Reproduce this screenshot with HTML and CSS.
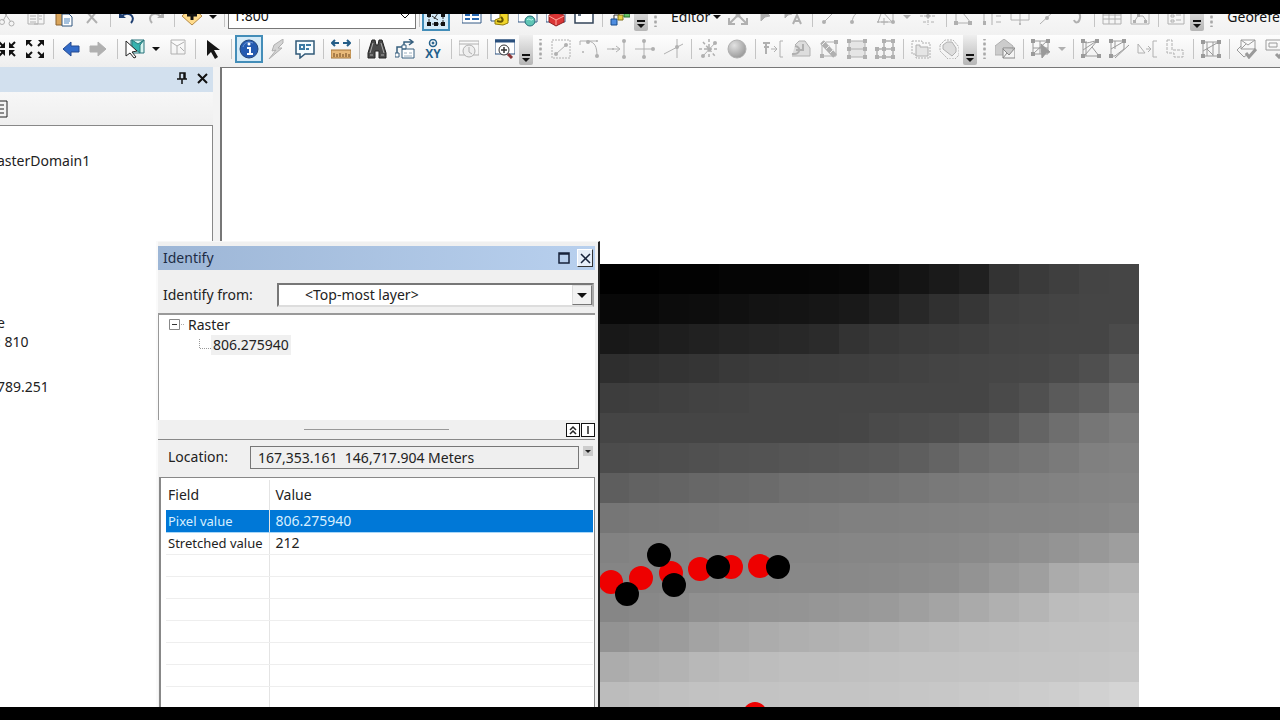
FILE: index.html
```html
<!DOCTYPE html>
<html lang="en">
<head>
<meta charset="utf-8">
<title>Identify - Map</title>
<link rel="stylesheet" href="styles.css">
</head>
<body>
<div class="app">
  <div class="toolbar toolbar-top" role="toolbar" aria-label="Standard and Editor">
    <button class="tool off" aria-label="Cut"><svg viewBox="0 0 20 20"><path d="M12 1 5 14M5 4l8 11"/><circle cx="4" cy="15" r="2.5"/><circle cx="13.500" cy="16.500" r="2.500"/></svg></button>
    <button class="tool off" aria-label="Copy"><svg viewBox="0 0 20 20"><path d="M2 2h10v15H2zM8 5h8l2 2v10H8M4 9h6M4 12h6M4 15h6M13 9h3M13 12h3"/></svg></button>
    <button class="tool" aria-label="Paste"><svg viewBox="0 0 20 20"><path fill="#d9a45a" stroke="#8a6330" d="M2 1h13v17H2z"/><path fill="#fff" stroke="#31577f" d="M8 7h7l3 3v9H8z"/><path stroke="#4b83bd" d="M10 12h6M10 14h6M10 16h5"/></svg></button>
    <button class="tool off" aria-label="Delete"><svg viewBox="0 0 20 20"><path stroke-width="2" d="m4 4 11 12M15 4 5 16"/></svg></button>
    <span class="sep"></span>
    <button class="tool" aria-label="Undo"><svg viewBox="0 0 20 20"><path stroke="#1f3f70" stroke-width="2" d="M3 10c6-7 16-1 10 6"/><path fill="#1f3f70" stroke="none" d="M1 5v6h7z"/></svg></button>
    <button class="tool off" aria-label="Redo"><svg viewBox="0 0 20 20"><path stroke-width="2" d="M15 10C9 3 0 9 6 16"/><path fill="currentColor" stroke="none" d="M18 5v6h-7z"/></svg></button>
    <span class="sep"></span>
    <button class="tool" aria-label="Add data"><svg viewBox="0 0 20 20"><path fill="#ffdb8b" stroke="#b58a48" d="M10 0 20 9 10 18 0 9z"/><path stroke="#111" stroke-width="3" d="M10 3v10M5 8h10"/></svg></button>
    <button class="caret" aria-label="Add data menu"></button>
    <span class="sep"></span>
    <label class="scale"><span class="hidden">Map scale</span><input value="1:800"><svg viewBox="0 0 12 8"><path d="m1 1 5 5 5-5"/></svg></label>
    <span class="sep narrow"></span>
    <button class="tool on" aria-label="Editor toolbar"><svg viewBox="0 0 20 20"><path stroke="#333" stroke-dasharray="3 1" d="M3 8v9h14V8"/><path stroke="#333" d="M8 12 14 3M6 9l6 4"/><path fill="#111" stroke="none" d="M1 6h4v4H1zM1 15h4v4H1zM8 15h4v4H8zM15 15h4v4h-4zM15 6h4v4h-4z"/></svg></button>
    <span class="sep blank"></span>
    <button class="tool" aria-label="Table of contents"><svg viewBox="0 0 20 20"><path fill="#fff" stroke="#345a86" d="M0 1h19v15H0z"/><path stroke="#2a68b0" stroke-width="2" d="M3 8h5M3 12h5M10 8h7M10 12h7"/></svg></button>
    <button class="tool" aria-label="Catalog"><svg viewBox="0 0 20 20"><path fill="#fff" stroke="#345a86" d="M1 1h17v13H1z"/><path fill="#f1d62a" stroke="#927b0b" d="M10 6h8v10l-5 2-8-1v-4l5-2z"/><path stroke="#665500" stroke-width="2" d="M7 14c6 2 7-1 4-4"/></svg></button>
    <button class="tool" aria-label="Search"><svg viewBox="0 0 20 20"><path fill="#fff" stroke="#345a86" d="M0 1h19v14H0z"/><circle cx="12" cy="14" r="5" fill="#60c5b5" stroke="#236d79"/><path stroke="#c3fff4" d="M9 13c2-3 4 2 6-1"/></svg></button>
    <button class="tool" aria-label="Toolbox"><svg viewBox="0 0 20 20"><path fill="#fff" stroke="#345a86" d="M0 1h19v14H0z"/><path fill="#db3535" stroke="#8f2020" d="m3 8 7-2 8 2v7l-8 4-7-4z"/><path stroke="#ffaaa0" d="m3 9 7 4 8-4M10 13v5"/></svg></button>
    <button class="tool" aria-label="Python"><svg viewBox="0 0 20 20"><path fill="#fff" stroke="#33445a" stroke-width="1.500" d="M1 1h18v15H1zM4 8h3"/></svg></button>
    <span class="sep"></span>
    <button class="tool" aria-label="ModelBuilder"><svg viewBox="0 0 20 20"><path stroke="#333" d="M4 13V8h5V5h8"/><path fill="#4e8de0" stroke="#174a8a" d="M1 12h6v6H1z"/><path fill="#ead445" stroke="#82721c" d="M8 8h5v5H8z"/><path fill="#64c267" stroke="#26702b" d="M14 4h6v6h-6z"/></svg></button>
    <button class="overflow" aria-label="More standard tools"></button>
    <span class="grip"></span>
    <button class="menu">Editor</button>
    <button class="caret" aria-label="Editor menu"></button>
    <button class="tool off" aria-label="Edit tool"><svg viewBox="0 0 20 20"><path stroke-width="2" d="m9 9-7 7M11 9l7 7M1 11v6h6M19 11v6h-6"/><circle cx="10" cy="8" r="2" fill="currentColor"/></svg></button>
    <button class="tool off" aria-label="Edit annotation"><svg viewBox="0 0 20 20"><path fill="currentColor" d="m5 0 9 9-5 1-4 4z"/></svg></button>
    <button class="tool off" aria-label="Text tool"><svg viewBox="0 0 20 20"><path fill="currentColor" d="m1 0 7 7-4 1-3 3z"/><path stroke-width="2" d="m9 17 4-9 4 9M10 14h6"/></svg></button>
    <span class="sep"></span>
    <button class="tool off" aria-label="Straight segment"><svg viewBox="0 0 20 20"><path d="M4 15 17 2"/><circle class="dot" cx="4" cy="15" r="2"/></svg></button>
    <button class="tool off" aria-label="Arc segment"><svg viewBox="0 0 20 20"><path d="M4 15C5 8 9 4 17 3"/><circle class="dot" cx="4" cy="15" r="2"/></svg></button>
    <button class="tool off" aria-label="Trace"><svg viewBox="0 0 20 20"><path d="M2 15 6 4l10 11H2M13 3h4v12M8 11v7M5 15h7"/><circle class="dot" cx="2" cy="15" r="1"/><circle class="dot" cx="17" cy="15" r="2"/></svg></button>
    <button class="caret off" aria-label="Segment menu"></button>
    <button class="tool off" aria-label="Point"><svg viewBox="0 0 20 20"><path stroke-dasharray="3 1" d="M10 1v17M2 9h16M5 15h4M13 15h4"/><circle class="dot" cx="10" cy="9" r="2"/></svg></button>
    <span class="sep"></span>
    <button class="tool off" aria-label="Edit vertices"><svg viewBox="0 0 20 20"><path d="M2 16V3l7 3 8 10H2"/><path class="nodes" d="M0 14h4v4H0zM14 14h4v4h-4z"/></svg></button>
    <button class="tool off" aria-label="Reshape"><svg viewBox="0 0 20 20"><path d="M2 16V5h5M10 0v18M13 4h6M14 9h5M14 15h5"/><path class="nodes" d="M1 14h3v4H1z"/></svg></button>
    <button class="tool off" aria-label="Cut polygons"><svg viewBox="0 0 20 20"><path d="M1 3h18v10H1zM10 0v18"/><circle class="dot" cx="10" cy="17" r="1"/></svg></button>
    <button class="tool off" aria-label="Split"><svg viewBox="0 0 20 20"><path d="M2 17 16 4"/><circle class="dot" cx="9" cy="11" r="2"/></svg></button>
    <button class="tool off" aria-label="Rotate"><svg viewBox="0 0 20 20"><path stroke-width="2" d="M3 6c6-4 12-1 11 5s-5 5-6 2"/></svg></button>
    <span class="sep"></span>
    <button class="tool off" aria-label="Attributes"><svg viewBox="0 0 20 20"><path d="M1 2h18v15H1zM1 8h18M1 12h18M7 3v14M13 3v14"/></svg></button>
    <button class="tool off" aria-label="Sketch properties"><svg viewBox="0 0 20 20"><path d="M1 2h18v15H1zM4 15l4-6h5l4 6"/><path class="nodes" d="M3 13h3v3H3zM7 7h3v3H7zM14 13h3v3h-3z"/></svg></button>
    <span class="sep"></span>
    <button class="tool off" aria-label="Create features"><svg viewBox="0 0 20 20"><path d="M2 2h16v15H2zM5 8h3v2H5zM5 13h3v2H5zM10 8h5M10 13h5"/></svg></button>
    <button class="overflow" aria-label="More editor tools"></button>
    <span class="grip"></span>
    <button class="menu">Georeferencing</button>
  </div>

  <div class="toolbar toolbar-tools" role="toolbar" aria-label="Tools">
    <button class="tool" aria-label="Fixed zoom in"><svg viewBox="0 0 20 20"><path class="arrows" d="m2 3 4 4m12-4-4 4M2 17l4-4m12 4-4-4"/><path class="heads" d="M8 3v6H2zM12 3v6h6zM8 17v-6H2zM12 17v-6h6z"/></svg></button>
    <button class="tool" aria-label="Fixed zoom out"><svg viewBox="0 0 20 20"><path class="arrows" d="m3 3 4 4m10-4-4 4M3 17l4-4m10 4-4-4"/><path class="heads" d="M1 7V1h6zM19 7V1h-6zM1 13v6h6zM19 13v6h-6z"/></svg></button>
    <span class="sep"></span>
    <button class="tool" aria-label="Previous extent"><svg viewBox="0 0 20 20"><path fill="#326bc8" stroke="#254a91" d="m2 10 8-7v4h8v6h-8v4z"/></svg></button>
    <button class="tool off" aria-label="Next extent"><svg viewBox="0 0 20 20"><path fill="currentColor" d="m17 10-8-7v4H1v6h8v4z"/></svg></button>
    <span class="sep"></span>
    <button class="tool" aria-label="Select features"><svg viewBox="0 0 20 20"><path fill="#d6f4ef" stroke="#27737b" d="M6 1h13v13H6z"/><path fill="#35b2ae" stroke="#28797c" d="m7 1 6 4 6-4-4 5v8L7 8z"/><path fill="#fff" stroke="#222" d="m1 2 11 10-5 1 4 5-2 1-4-5-4 3z"/></svg></button>
    <button class="caret" aria-label="Selection menu"></button>
    <button class="tool off" aria-label="Clear selection"><svg viewBox="0 0 20 20"><path d="M4 1h14v14H4zM4 3l6 4v8M10 7l7-4M13 8l4 4"/></svg></button>
    <span class="sep"></span>
    <button class="tool" aria-label="Select elements"><svg viewBox="0 0 20 20"><path fill="#161616" stroke="none" d="M4 1v16l4-4 4 7 3-2-4-7h6z"/></svg></button>
    <span class="sep"></span>
    <button class="tool on" aria-label="Identify" aria-pressed="true"><svg viewBox="0 0 20 20"><circle cx="10" cy="10" r="9" fill="#245bb1" stroke="#244678"/><path stroke="#719ad8" d="M4 8c1-4 5-6 10-4"/><path stroke="#fff" stroke-width="2" d="M8 9h3v6M8 15h6"/><circle cx="10" cy="5" r="1.500" fill="#fff" stroke="none"/></svg></button>
    <button class="tool off" aria-label="Hyperlink"><svg viewBox="0 0 20 20"><path fill="#d3d3d3" d="m16 0-9 6-2 6 4-1-7 9 13-11h-4l5-5z"/></svg></button>
    <button class="tool" aria-label="HTML popup"><svg viewBox="0 0 20 20"><path fill="#f6fcff" stroke="#315978" stroke-width="1.500" d="M1 2h18v13h-9l-5 4v-4H1z"/><path stroke="#3d7ba4" stroke-width="2" d="M5 6h4v4H5zM11 6h5M11 10h3"/></svg></button>
    <span class="sep"></span>
    <button class="tool" aria-label="Measure"><svg viewBox="0 0 20 20"><path stroke="#245d87" stroke-width="2" d="M1 4h7M12 4h7M4 1 1 4l3 3M16 1l3 3-3 3"/><path fill="#e8b979" stroke="#a47438" d="M0 11h20v8H0z"/><path stroke="#6b421d" d="M3 14v4M6 15v3M9 14v4M12 15v3M15 14v4M18 15v3"/></svg></button>
    <span class="sep"></span>
    <button class="tool" aria-label="Find"><svg viewBox="0 0 20 20"><path fill="#4a4a4a" stroke="#222" d="M5 1h3l1 5h2l1-5h3l4 13v5h-7v-7H8v7H1v-5z"/><path stroke="#aaa" d="M6 4 3 14M14 4l3 10M3 16h3M14 16h3"/></svg></button>
    <button class="tool" aria-label="Find route"><svg viewBox="0 0 20 20"><path stroke="#365f7e" stroke-width="1.500" d="M2 16V8h7V3h8M14 0l4 3-4 3"/><path fill="#fff" stroke="#365f7e" d="M0 14h4v4H0zM7 6h4v4H7zM7 10h12v9H7z"/><path stroke="#9aaebd" d="M9 14h3M14 14h3M9 17h8"/></svg></button>
    <button class="tool xy" aria-label="Go to XY"><svg viewBox="0 0 20 9"><circle cx="10" cy="4" r="3.500" stroke="#23608b" stroke-width="1.500"/><circle cx="10" cy="4" r="1" fill="#23608b"/></svg><span>XY</span></button>
    <span class="sep"></span>
    <button class="tool off" aria-label="Time slider"><svg viewBox="0 0 20 20"><path d="M0 2h20v14H0zM0 5h20"/><circle cx="10" cy="12" r="6" fill="#eee"/><path d="M10 8v5l3 2"/></svg></button>
    <span class="sep"></span>
    <button class="tool" aria-label="Viewer window"><svg viewBox="0 0 20 20"><path fill="#fff" stroke="#294f7d" d="M0 1h20v14H0z"/><path stroke="#294f7d" stroke-width="3" d="M0 2h20"/><circle cx="9" cy="11" r="5" fill="#fff" stroke="#333"/><path stroke="#333" stroke-width="1.500" d="M9 8v6M6 11h6"/><path stroke="#8b3535" stroke-width="3" d="m13 15 4 4"/></svg></button>
    <button class="overflow" aria-label="More tools"></button>
    <span class="grip"></span>
    <button class="tool off" aria-label="Line"><svg viewBox="0 0 20 20"><path stroke-dasharray="2 1" d="M1 1h18v18H1z"/><path d="m5 15 10-9"/><circle class="dot" cx="5" cy="15" r="2"/><circle class="dot" cx="15" cy="6" r="2"/></svg></button>
    <button class="tool off" aria-label="Curve"><svg viewBox="0 0 20 20"><path d="M1 2h8c7 1 9 6 9 15M1 2v4M9 2h9"/><circle class="dot" cx="9" cy="3" r="2"/><circle class="dot" cx="18" cy="2" r="1"/><circle class="dot" cx="18" cy="17" r="2"/><circle class="dot" cx="4" cy="13" r="1"/></svg></button>
    <button class="tool off" aria-label="Extend"><svg viewBox="0 0 20 20"><path d="M0 10h12M9 7l4 3-4 3M17 2v16"/><circle class="dot" cx="6" cy="10" r="1"/><circle class="dot" cx="17" cy="2" r="2"/><circle class="dot" cx="17" cy="18" r="2"/></svg></button>
    <button class="tool off" aria-label="Midpoint"><svg viewBox="0 0 20 20"><path d="M0 10h19M9 1v18"/><circle class="dot" cx="9" cy="2" r="2"/><circle class="dot" cx="9" cy="18" r="2"/><circle class="dot" cx="18" cy="10" r="2"/></svg></button>
    <button class="tool off" aria-label="Intersection"><svg viewBox="0 0 20 20"><path d="M1 15 20 5M14 0v19"/><circle class="dot" cx="14" cy="8" r="2"/></svg></button>
    <span class="sep"></span>
    <button class="tool off" aria-label="Explode"><svg viewBox="0 0 20 20"><path stroke-dasharray="3 2" stroke-width="1.500" d="M10 0v20M0 10h20M4 3l12 14"/><path d="M4 17 17 3"/><circle class="dot" cx="4" cy="17" r="2"/><circle class="dot" cx="16" cy="4" r="2"/><circle class="dot" cx="10" cy="10" r="2"/></svg></button>
    <button class="tool off" aria-label="Globe"><svg viewBox="0 0 20 20"><defs><radialGradient id="ball" cx=".35" cy=".3" r=".8"><stop stop-color="#e2e2e2"/><stop offset="1" stop-color="#929292"/></radialGradient></defs><circle cx="10" cy="10" r="9" fill="url(#ball)"/></svg></button>
    <span class="sep"></span>
    <button class="tool off" aria-label="Align edge"><svg viewBox="0 0 20 20"><path stroke-width="2" d="M0 4h7M3 4v11M1 8h5"/><path d="M8 10h6M11 7l3 3-3 3M20 2h-3v16h3"/></svg></button>
    <button class="tool off" aria-label="Replace geometry"><svg viewBox="0 0 20 20"><path fill="#ddd" d="M1 17h18V9l-5-7H8L4 6"/><path stroke-width="2" d="M1 15c8 1 10-7 3-8M5 11h7V5"/></svg></button>
    <button class="tool off" aria-label="Construct polygons"><svg viewBox="0 0 20 20"><path d="M3 3h14v14H3z"/><path stroke-width="5" d="m3 3 13 14"/><path stroke="#eee" d="m3 6 4-4M7 10l4-4M11 14l4-4"/><path class="nodes" d="M15 1h4v4h-4zM1 15h4v4H1z"/></svg></button>
    <button class="tool off" aria-label="Rectangle"><svg viewBox="0 0 20 20"><path fill="#e5e5e5" d="M2 2h16v16H2zM2 10h16"/><path class="nodes" d="M0 0h4v4H0zM16 0h4v4h-4zM0 8h4v4H0zM16 8h4v4h-4zM0 16h4v4H0zM16 16h4v4h-4z"/></svg></button>
    <button class="tool off" aria-label="Split polygons"><svg viewBox="0 0 20 20"><path stroke-width="1.500" d="M9 2h9v16H2v-8h16M9 2v16"/><path class="nodes" d="M7 0h4v4H7zM16 0h4v4h-4zM0 8h4v4H0zM7 8h4v4H7zM16 8h4v4h-4zM0 16h4v4H0zM7 16h4v4H7zM16 16h4v4h-4z"/></svg></button>
    <span class="sep"></span>
    <button class="tool off" aria-label="Union"><svg viewBox="0 0 20 20"><path stroke-dasharray="2 1" d="M1 2h10v2h8v15H5v-4H1z"/><path fill="#e5e5e5" d="M5 6h4v2h8v9H5z"/></svg></button>
    <button class="tool off" aria-label="Buffer"><svg viewBox="0 0 20 20"><path stroke-dasharray="2 1" d="M1 6 6 1h8l6 7v8l-4 4H9l-8-8z"/><path fill="#ddd" d="m4 6 4-3h5l4 6v4l-4 4-9-7z"/></svg></button>
    <button class="overflow" aria-label="More advanced editing tools"></button>
    <span class="grip"></span>
    <button class="tool off" aria-label="Topology"><svg viewBox="0 0 20 20"><path fill="#ccc" d="M0 7 9 0l9 7v9H0z"/><path fill="#f4f4f4" stroke="#888" d="M8 9h12v10H8zM8 10l6 6 6-7M8 19l4-5"/></svg></button>
    <span class="sep"></span>
    <button class="tool off dark" aria-label="Topology edit"><svg viewBox="0 0 20 20"><path d="M2 2h15v13H2zM2 9h15M9 2v13M3 14 16 2"/><path class="nodes" d="M0 0h4v4H0zM15 0h4v4h-4zM0 13h4v4H0z"/><path fill="currentColor" d="m10 5 9 8-4 1-4 5z"/></svg></button>
    <button class="caret off" aria-label="Topology menu"></button>
    <span class="sep"></span>
    <button class="tool off dark" aria-label="Modify edge"><svg viewBox="0 0 20 20"><path d="M2 2c4 4 8 0 14 0l-5 6 7 9H2zM2 11 14 3M5 2v15M11 8 4 16"/><path class="nodes" d="M0 0h4v4H0zM14 0h4v4h-4zM0 15h4v4H0zM16 15h4v4h-4z"/></svg></button>
    <button class="tool off dark" aria-label="Reshape edge"><svg viewBox="0 0 20 20"><path d="M2 2h13v8L6 17H2zM2 10l12-7M6 2v8M6 19 20 6"/><path class="nodes" d="M0 0h4v4H0zM13 0h4v4h-4zM0 15h4v4H0z"/></svg></button>
    <button class="tool off" aria-label="Align to shape"><svg viewBox="0 0 20 20"><path d="m1 5 7 9H1zM9 10h5M11 7l3 3-3 3M20 2h-4v16h4"/></svg></button>
    <button class="tool off" aria-label="Generalize"><svg viewBox="0 0 20 20"><path stroke-dasharray="3 1" d="M2 1h5v10h11v7H9v-4H2z"/></svg></button>
    <span class="sep"></span>
    <button class="tool off dark" aria-label="Shared features"><svg viewBox="0 0 20 20"><path d="M2 3h16v14H2zM6 3v14M2 12 16 4M12 3v14M6 10l6 6"/><path class="nodes" d="M0 1h4v4H0zM16 1h4v4h-4zM0 15h4v4H0zM16 15h4v4h-4z"/></svg></button>
    <span class="sep"></span>
    <button class="tool off dark" aria-label="Validate"><svg viewBox="0 0 20 20"><path d="M4 1h14v9H4zM4 1l7 5 7-5M4 10l5-5M4 7l-4 4 7 7 4-3"/><path stroke-width="3" d="m9 14 3 4 7-8"/></svg></button>
    <button class="tool off dark" aria-label="Validate extent"><svg viewBox="0 0 20 20"><path d="M1 1h17v10H1zM4 4h8v4H4z"/><path stroke-width="3" d="m11 15 3 3 6-7"/></svg></button>
  </div>

  <main class="workspace">
    <aside class="contents">
      <header class="contents-title">
        <button class="pane-btn" aria-label="Auto hide"><svg viewBox="0 0 12 12"><path stroke-width="1.500" d="M4 1h5v6H4zM1 7h10M6 7v5M8 1v6"/></svg></button>
        <button class="pane-btn" aria-label="Close contents"><svg viewBox="0 0 12 12"><path stroke-width="2" d="m2 2 9 9M11 2l-9 9"/></svg></button>
      </header>
      <div class="contents-tools"><button class="list-btn" aria-label="Options"><svg viewBox="0 0 12 18"><path d="M0 1h11v16H0M0 5h8M0 9h8M0 13h8"/></svg></button></div>
      <div class="layers">
        <p class="layer-name">asterDomain1</p>
        <p class="legend-title">e</p>
        <p class="legend-high">: 810</p>
        <p class="legend-low">789.251</p>
      </div>
    </aside>
    <section class="map" aria-label="Map">
      <svg class="raster" viewBox="0 0 540 448" preserveAspectRatio="none" shape-rendering="crispEdges"></svg>
      <svg class="points" viewBox="0 0 540 470"></svg>
    </section>

    <section class="identify" aria-label="Identify">
      <header class="identify-title">
        <h1>Identify</h1>
        <button class="win-btn" aria-label="Maximize"><svg viewBox="0 0 12 12"><path stroke-width="1.500" d="M1 1h10v10H1zM1 2h10"/></svg></button>
        <button class="win-btn close" aria-label="Close"><svg viewBox="0 0 12 12"><path stroke-width="1.500" d="m2 2 9 9M11 2l-9 9"/></svg></button>
      </header>
      <div class="from-row">
        <label for="from">Identify from:</label>
        <div class="combo"><select id="from"><option>&lt;Top-most layer&gt;</option></select><span class="combo-arrow"></span></div>
      </div>
      <div class="tree">
        <div class="node"><svg viewBox="0 0 16 12"><path stroke="#888" d="M.5.5h10v10H.5z"/><path stroke="#333" d="M3 5.500h5"/><path stroke="#aaa" stroke-dasharray="1 1" d="M12 5.500h4"/></svg><span>Raster</span></div>
        <div class="node child"><svg viewBox="0 0 12 12"><path stroke="#999" stroke-dasharray="1 1" d="M.5 0v9.500H12"/></svg><span class="picked">806.275940</span></div>
      </div>
      <div class="splitter">
        <span class="handle"></span>
        <div class="split-btns">
        <button class="split-btn" aria-label="Collapse"><svg viewBox="0 0 12 12"><path stroke-width="1.500" d="m3 6 3-3 3 3M3 10l3-3 3 3"/></svg></button>
        <button class="split-btn" aria-label="Side by side"><svg viewBox="0 0 12 12"><path stroke-width="1.500" d="M6 2v8"/></svg></button>
        </div>
      </div>
      <div class="location-row">
        <label for="loc">Location:</label>
        <input id="loc" readonly value="167,353.161  146,717.904 Meters">
        <button class="unit-btn" aria-label="Units"></button>
      </div>
      <div class="grid">
        <table>
          <thead><tr><th scope="col">Field</th><th scope="col">Value</th></tr></thead>
          <tbody>
            <tr class="selected"><td>Pixel value</td><td>806.275940</td></tr>
            <tr><td>Stretched value</td><td>212</td></tr>
            <tr><td></td><td></td></tr><tr><td></td><td></td></tr><tr><td></td><td></td></tr><tr><td></td><td></td></tr>
            <tr><td></td><td></td></tr><tr><td></td><td></td></tr><tr><td></td><td></td></tr>
          </tbody>
        </table>
      </div>
    </section>
  </main>
</div>
<script src="map.js"></script>
</body>
</html>
```
FILE: styles.css
```css
* { box-sizing: border-box; }
body {
  margin: 0;
  height: 100vh;
  padding: 14px 0 13px;
  background: #000;
  color: #222;
  font: 14px/20px "Noto Sans", "Open Sans", sans-serif;
  overflow: hidden;
}
button, input, select { font: inherit; color: inherit; margin: 0; }
button { border: 0; padding: 0; background: none; }
svg { display: block; fill: none; stroke: currentColor; }
p, h1 { margin: 0; }
.hidden { position: absolute; width: 1px; height: 1px; overflow: hidden; clip-path: inset(50%); }

.app { height: 100%; display: flex; flex-direction: column; overflow: hidden; background: #f3f3f3; }

/* Toolbars */
.toolbar { display: flex; flex: none; overflow: hidden; color: #111; }
.toolbar > * { flex: none; }
.toolbar-top { height: 21px; align-items: flex-end; background: linear-gradient(#f7f7f7, #f1f1f1); padding-bottom: 4px; margin-left: -6px; }
.toolbar-tools { height: 32px; align-items: flex-start; background: linear-gradient(#fdfdfd, #eeeeee); margin-left: -7px; }
.tool { width: 28px; height: 28px; display: grid; place-items: center; }
.tool svg { width: 20px; height: 20px; }
.off { color: #b0b0b0; }
.off.dark { color: #9a9a9a; }
.on { border: 2px solid #438db8; background: #d5ebf8; }
.nodes, .heads, .dot { fill: currentColor; stroke: none; }
.arrows { stroke-width: 2; }
.xy { align-content: center; font: bold 12px/11px "Open Sans", sans-serif; color: #23608b; }
.tool.xy svg { height: 9px; }
.sep { width: 8px; height: 20px; margin: 4px 0; background: linear-gradient(#c4c4c4, #c4c4c4) center / 1px 100% no-repeat; }
.sep.narrow { width: 6px; }
.sep.blank { background: none; }
.grip { width: 14px; height: 20px; margin: 4px 0; background: radial-gradient(circle, #a8a8a8 1px, transparent 2px) center / 5px 5px repeat-y; }
.caret { width: 14px; height: 28px; display: grid; place-items: center; }
.caret::after { content: ""; border: 4px solid transparent; border-top-color: currentColor; border-bottom: 0; }
.overflow { width: 14px; height: 30px; display: flex; flex-direction: column; align-items: center; justify-content: flex-end; gap: 2px; padding-bottom: 3px; background: linear-gradient(#efefef, #b5b5b5); border-radius: 0 0 2px 2px; }
.overflow::before { content: ""; width: 8px; height: 2px; background: #111; }
.overflow::after { content: ""; border: 4px solid transparent; border-top-color: #111; border-bottom: 0; }
.menu { height: 28px; padding-left: 9px; }
.scale { width: 188px; height: 24px; margin-bottom: 2px; display: flex; align-items: center; border: 1px solid #777; background: #fff; padding: 0 4px 2px 0; }
.scale input { flex: 1; min-width: 0; border: 0; padding: 0 0 0 4px; background: none; }
.scale svg { width: 12px; height: 8px; }

/* Workspace */
.workspace { position: relative; flex: 1; min-height: 0; display: flex; }
.contents { width: 220px; flex: none; display: flex; flex-direction: column; padding-right: 7px; }
.contents-title { height: 25px; display: flex; align-items: center; justify-content: flex-end; gap: 8px; padding: 0 5px 4px; background: #d2e0ee; color: #111; }
.pane-btn svg { width: 12px; height: 12px; }
.contents-tools { height: 33px; display: flex; align-items: center; background: linear-gradient(#f7f7f7, #efefef); }
.list-btn { margin-left: -4px; }
.list-btn svg { width: 12px; height: 18px; }
.layers { flex: 1; background: #fff; border: 1px solid #888; border-width: 1px 1px 0 0; padding-top: 25px; overflow: hidden; }
.layers p { margin-left: -3px; }
.layers .legend-title { margin-top: 142px; }
.layers .legend-high { margin-top: -1px; }
.layers .legend-low { margin-top: 25px; }
.map { position: relative; flex: 1; background: #fff; border: 2px solid #777; border-width: 1px 0 0 2px; overflow: hidden; }
.raster { position: absolute; left: 377px; top: 196px; width: 540px; height: 448px; stroke: none; }
.points { position: absolute; left: 378px; top: 196px; width: 540px; height: 470px; stroke: none; }

/* Identify window */
.identify { position: absolute; left: 158px; top: 174px; bottom: 0; width: 442px; display: flex; flex-direction: column; padding: 4px 3px 0 0; background: #f0f0f0; border-top: 1px solid #f7f7f7; border-right: 2px solid #222; box-shadow: -2px 0 #fafafa; }
.identify-title { height: 24px; flex: none; display: flex; align-items: center; gap: 5px; padding: 0 2px 0 5px; background: linear-gradient(90deg, #9db6d6, #b8d0ee); }
.identify-title h1 { flex: 1; font-size: 14px; font-weight: 400; color: #1d2c45; }
.win-btn { width: 16px; height: 18px; display: grid; place-items: center; color: #16223a; }
.win-btn svg { width: 12px; height: 12px; }
.close { background: #e6eef8; border: 1px solid #fff; border-right-color: #333; border-bottom-color: #333; }
.from-row { flex: none; display: flex; align-items: center; height: 43px; padding: 7px 1px 0 5px; }
.from-row label { width: 114px; }
.combo { position: relative; flex: 1; height: 24px; }
.combo select { width: 100%; height: 100%; appearance: none; border: 2px solid #777; border-right-color: #aaa; border-bottom-color: #ddd; border-radius: 0; background: #fff; padding: 0 24px 0 26px; }
.combo-arrow { position: absolute; right: 2px; top: 2px; bottom: 2px; width: 20px; display: grid; place-items: center; background: #f2f2f2; border: 1px solid #ddd; border-right-color: #777; border-bottom-color: #777; pointer-events: none; }
.combo-arrow::after { content: ""; border: 5px solid transparent; border-top-color: #111; border-bottom: 0; }
.tree { flex: none; height: 107px; border: 1px solid #999; border-width: 2px 0 0 1px; background: #fff; }
.node { display: flex; align-items: center; gap: 3px; height: 20px; padding-left: 10px; }
.node svg { width: 16px; height: 12px; }
.node.child { padding-left: 40px; gap: 0; }
.node.child svg { width: 12px; }
.picked { background: #f0f0f0; padding: 0 2px; }
.splitter { flex: none; height: 19px; display: grid; grid-template-columns: 1fr 1fr 1fr; align-items: center; }
.handle { grid-column: 2; height: 1px; background: #999; }
.split-btns { display: flex; gap: 1px; justify-content: flex-end; }
.split-btn { width: 14px; height: 14px; border: 1px solid #111; background: #fff; display: grid; place-items: center; }
.split-btn svg { width: 12px; height: 12px; }
.location-row { flex: none; display: flex; align-items: flex-start; height: 38px; padding: 6px 2px 0 10px; border-top: 1px solid #888; }
.location-row label { width: 82px; line-height: 22px; }
.location-row input { flex: 1; min-width: 0; height: 23px; border: 1px solid #777; background: #efefef; padding: 0 7px; }
.unit-btn { width: 10px; height: 10px; margin-left: 4px; background: #ccc; display: grid; place-items: center; }
.unit-btn::after { content: ""; border: 3px solid transparent; border-top-color: #222; border-bottom: 0; }
.grid { flex: 1; min-height: 0; overflow: hidden; margin-left: 1px; padding: 2px 1px 0 5px; background: #fff; border: 1px solid #888; border-width: 1px 1px 0 2px; }
table { width: 100%; table-layout: fixed; border-collapse: collapse; }
th, td { height: 22px; padding: 0 0 0 2px; line-height: 20px; text-align: left; font-weight: 400; white-space: nowrap; border-bottom: 1px solid #eee; }
th { height: 30px; border: 0; }
th:first-child { width: 103px; }
td:first-child { font-size: 13px; }
th + th, td + td { border-left: 1px solid #e4e4e4; padding-left: 6px; }
.selected td { background: #0078d7; color: #d8efff; border-bottom-color: #a9d7f8; }
```
FILE: map.js
```js
const SVG = "http://www.w3.org/2000/svg";

// Grey level of every raster cell, two hex digits per cell, one string per row.
const rows = [
  "00 00 02 02 05 05 05 06 08 0f 14 1a 20 33 3a 3f 44 45",
  "08 08 0c 0d 10 13 14 16 19 20 28 30 36 40 42 44 45 45",
  "18 1a 1e 21 24 26 28 2b 33 38 3b 3d 3f 43 44 45 45 4b",
  "2e 30 33 35 39 3b 3c 3d 3e 40 42 44 45 46 47 4a 4f 5a",
  "3d 3e 40 42 43 45 45 45 45 45 45 45 45 4a 50 5a 60 6e",
  "45 45 45 45 45 45 45 45 46 4a 4c 4e 52 59 64 6e 76 7c",
  "4c 4d 4e 50 52 53 55 56 58 5a 5e 64 6c 71 75 7a 80 82",
  "5e 62 64 67 69 6b 6f 70 71 73 76 79 7b 7e 80 82 84 85",
  "76 78 79 7a 7c 7d 7d 7e 80 80 81 82 83 85 85 86 87 8a",
  "82 84 84 85 85 85 85 85 86 86 87 88 8a 8d 90 94 98 9e",
  "85 85 85 86 87 87 88 88 89 8a 8c 8e 93 9a 9f ab b0 b4",
  "86 88 8a 90 92 93 94 96 98 9a 9f a4 aa b0 b5 bc be c0",
  "93 98 9c a3 a8 ac af b1 b3 b6 b9 bb be bf c1 c2 c2 c3",
  "ac b0 b3 b8 bb bd bf bf c0 c1 c2 c2 c3 c3 c4 c4 c5 c6",
  "bc be c0 c2 c3 c3 c4 c4 c4 c5 c6 c7 c9 ca cc ce d1 d4"
];

function add(parent, name, attrs) {
  const el = document.createElementNS(SVG, name);
  for (const key in attrs) el.setAttribute(key, attrs[key]);
  parent.appendChild(el);
}

const raster = document.querySelector(".raster");
const edge = r => Math.round(r * 448 / rows.length);
rows.forEach((row, r) => row.split(" ").forEach((v, c) => {
  add(raster, "rect", { x: c * 30, y: edge(r), width: 30, height: edge(r + 1) - edge(r), fill: "#" + v + v + v });
}));

const points = document.querySelector(".points");
const red = [[11, 318], [41, 314], [71, 309], [100, 305], [131, 303], [160, 302], [155, 450]];
const black = [[59, 291], [27, 330], [74, 321], [118, 303], [178, 303]];
red.forEach(([cx, cy]) => add(points, "circle", { cx, cy, r: 12, fill: "#ee0000" }));
black.forEach(([cx, cy]) => add(points, "circle", { cx, cy, r: 12, fill: "#000" }));
```
